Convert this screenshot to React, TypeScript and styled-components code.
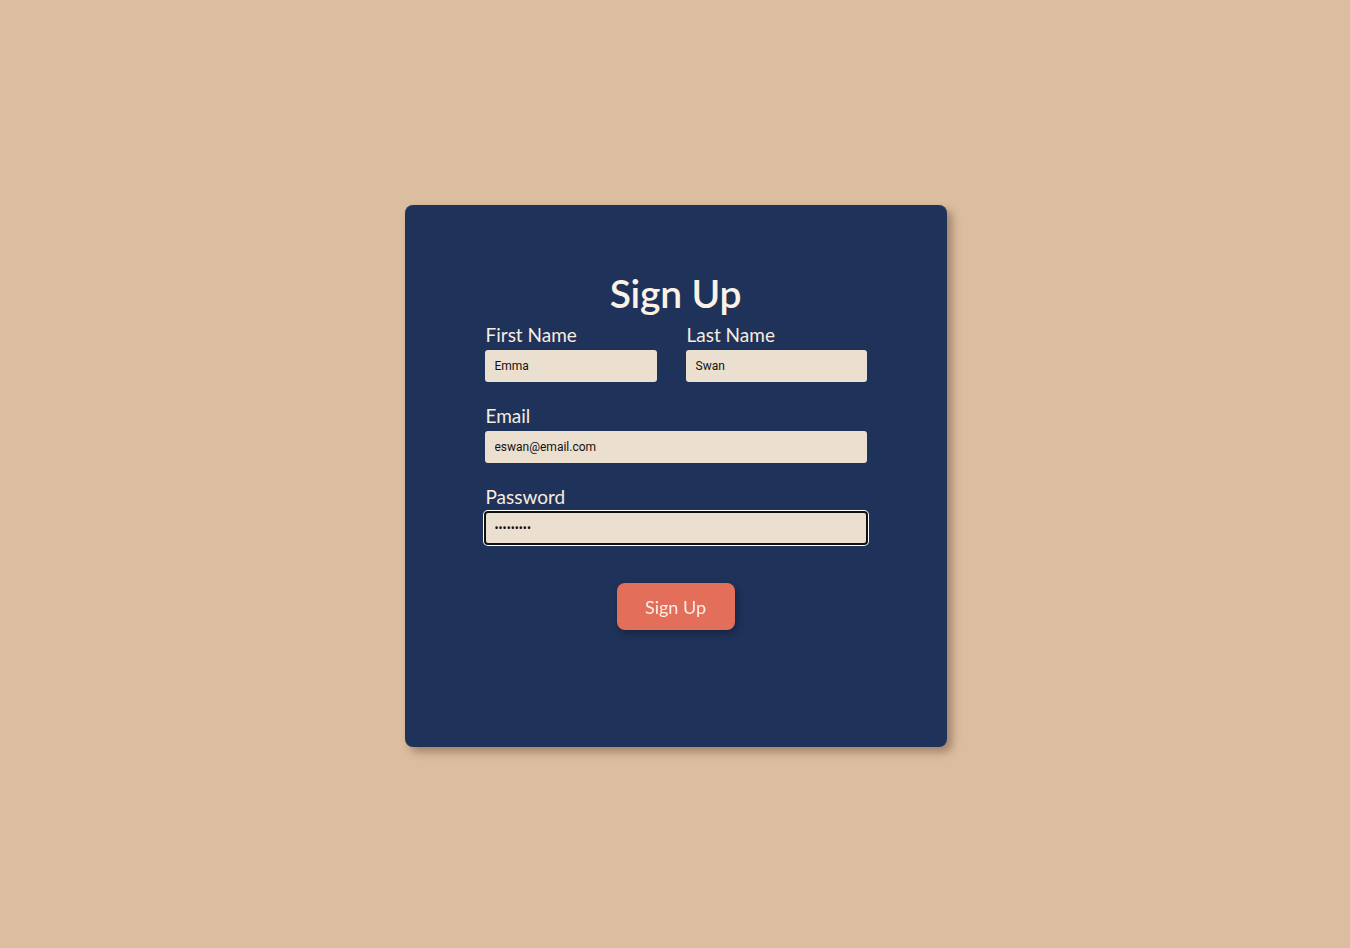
import React, { useState } from 'react';
import styled, { createGlobalStyle } from 'styled-components';

const GlobalStyle = createGlobalStyle`
  html, body {
    margin: 0;
    padding: 0;
    background: #dbbda0;
  }
  body {
    font-family: 'Lato', 'Noto Sans', sans-serif;
  }
`;

const Page = styled.div`
  min-height: 948px;
  display: flex;
  justify-content: center;
  align-items: flex-start;
  padding: 205px 0 0 1px;
  box-sizing: border-box;
`;

const Card = styled.form`
  width: 542px;
  height: 542px;
  box-sizing: border-box;
  background: #1f3259;
  border-radius: 8px;
  box-shadow: 5px 5px 8px rgba(90, 60, 40, 0.45);
  padding: 66px 80px 0;
  display: flex;
  flex-direction: column;
`;

const Title = styled.h1`
  margin: 0 0 12px;
  text-align: center;
  color: #fbf1e6;
  font-size: 39px;
  font-weight: 600;
  line-height: 44px;
  letter-spacing: -0.2px;
`;

const NameRow = styled.div`
  display: grid;
  grid-template-columns: 172px 181px;
  column-gap: 29px;
`;

const Field = styled.div<{ $gap?: number }>`
  display: flex;
  flex-direction: column;
  margin-bottom: ${p => p.$gap ?? 0}px;
`;

const Label = styled.label`
  color: #f6ece0;
  font-size: 19px;
  line-height: 16px;
  margin-bottom: 7px;
  padding-left: 1px;
`;

const Input = styled.input`
  height: 32px;
  box-sizing: border-box;
  width: 100%;
  border: none;
  border-radius: 3px;
  background: #ebdfd0;
  padding: 0 10px;
  font-family: 'Roboto', 'Liberation Sans', sans-serif;
  font-size: 12px;
  color: #111;
  &:focus {
    outline: 2px solid #111;
    outline-offset: -1px;
    box-shadow: 0 0 0 2px #ffffff;
  }
`;

const ButtonRow = styled.div`
  display: flex;
  justify-content: center;
  margin-top: 39px;
`;

const Button = styled.button`
  width: 118px;
  height: 47px;
  border: none;
  border-radius: 8px;
  background: #e36f5b;
  color: #fbeee4;
  font-family: 'Lato', 'Noto Sans', sans-serif;
  font-size: 18px;
  cursor: pointer;
  box-shadow: 2px 3px 6px rgba(10, 20, 40, 0.45);
`;

export default function App() {
  const [first, setFirst] = useState('Emma');
  const [last, setLast] = useState('Swan');
  const [email, setEmail] = useState('eswan@email.com');
  const [password, setPassword] = useState('secret123');

  return (
    <>
      <GlobalStyle />
      <Page>
        <Card onSubmit={e => e.preventDefault()}>
          <Title>Sign Up</Title>
          <NameRow>
            <Field $gap={26}>
              <Label htmlFor="first">First Name</Label>
              <Input id="first" value={first} onChange={e => setFirst(e.target.value)} />
            </Field>
            <Field $gap={26}>
              <Label htmlFor="last">Last Name</Label>
              <Input id="last" value={last} onChange={e => setLast(e.target.value)} />
            </Field>
          </NameRow>
          <Field $gap={26}>
            <Label htmlFor="email">Email</Label>
            <Input id="email" type="email" value={email} onChange={e => setEmail(e.target.value)} />
          </Field>
          <Field>
            <Label htmlFor="password">Password</Label>
            <Input
              id="password"
              type="password"
              autoFocus
              value={password}
              onChange={e => setPassword(e.target.value)}
            />
          </Field>
          <ButtonRow>
            <Button type="submit">Sign Up</Button>
          </ButtonRow>
        </Card>
      </Page>
    </>
  );
}
